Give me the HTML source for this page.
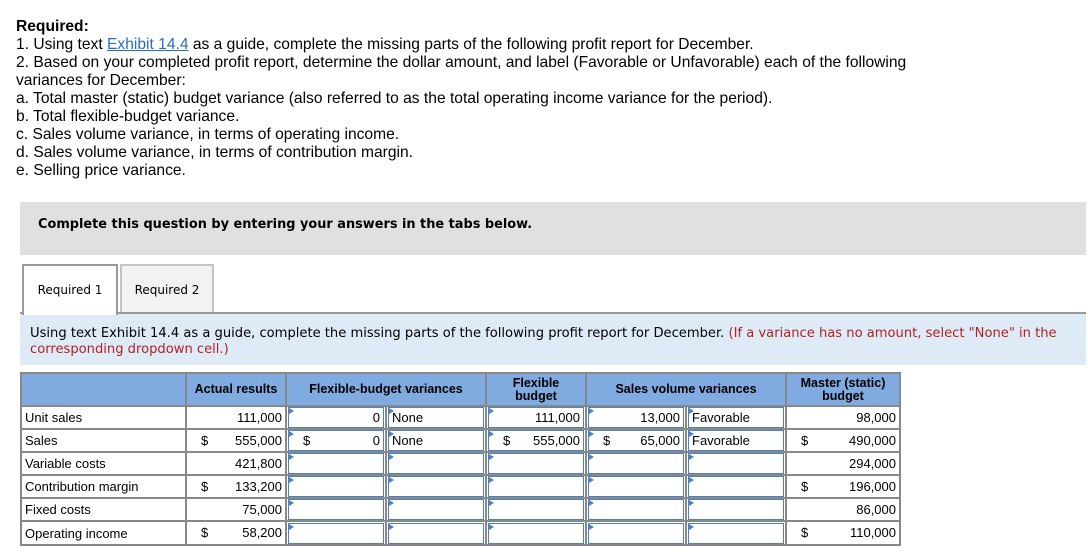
<!DOCTYPE html>
<html><head><style>
body{margin:0;width:1088px;height:552px;background:#fff;font-family:"Liberation Sans",Arial,sans-serif;color:#000;position:relative;overflow:hidden}
.q{position:absolute;left:16px;top:18px;font-size:15.6px;line-height:18px}
.q a{color:#2a6ebb;text-decoration:underline}
.gray{position:absolute;left:20px;top:202px;width:1066px;height:53px;background:#e0e0e0}
.gray span{position:absolute;left:18px;top:15px;font-family:"DejaVu Sans",sans-serif;font-weight:bold;font-size:12.9px}
.tab{position:absolute;top:264px;height:49px;font-family:"DejaVu Sans",sans-serif;font-size:12px;line-height:49px;text-align:center;box-sizing:border-box}
.t1{left:22px;width:96px;border:2px solid #999;border-bottom:none;background:#fff;height:51px;z-index:2}
.t2{left:120px;width:94px;border:2px solid #c4c4c4;border-bottom:none;background:#f2f2f2}
.line{position:absolute;left:20px;top:312px;width:1066px;height:2px;background:#999}
.blue{position:absolute;left:20px;top:314px;width:1066px;height:51px;background:#deebf7;font-family:"DejaVu Sans",sans-serif;font-size:13.1px;line-height:16px}
.blue div{position:absolute;left:10px;top:12px;white-space:nowrap}
.red{color:#b22222}
table{position:absolute;left:20px;top:372px;border-collapse:collapse;table-layout:fixed;font-size:13px}
td{border:2px solid #888;padding:0;height:20px;white-space:nowrap;overflow:hidden}
th{border:2px solid #888;background:#80abe0;font-size:12.5px;height:31px;line-height:13px;padding:0}
.l{padding-left:3px}
.in{position:relative;border:1px solid #4f81bd;height:19px;margin:0 1px;line-height:19px}
.in:before{content:"";position:absolute;left:0;top:0;border-left:5px solid #4f81bd;border-top:3px solid transparent;border-bottom:3px solid transparent}
.dl{position:absolute;left:14px}
.rv{position:absolute;right:3px}
.lv{position:absolute;left:3px}
.cell{position:relative;height:20px;line-height:20px}
</style></head><body>
<div class="q"><b>Required:</b><br>1. Using text <a>Exhibit 14.4</a> as a guide, complete the missing parts of the following profit report for December.<br>2. Based on your completed profit report, determine the dollar amount, and label (Favorable or Unfavorable) each of the following<br>variances for December:<br>a. Total master (static) budget variance (also referred to as the total operating income variance for the period).<br>b. Total flexible-budget variance.<br>c. Sales volume variance, in terms of operating income.<br>d. Sales volume variance, in terms of contribution margin.<br>e. Selling price variance.</div>
<div class="gray"><span>Complete this question by entering your answers in the tabs below.</span></div>
<div class="tab t1">Required 1</div><div class="tab t2">Required 2</div>
<div class="line"></div>
<div class="blue"><div>Using text Exhibit 14.4 as a guide, complete the missing parts of the following profit report for December. <span class="red">(If a variance has no amount, select "None" in the<br>corresponding dropdown cell.)</span></div></div>
<table>
<colgroup><col style="width:165px"><col style="width:100px"><col style="width:100px"><col style="width:100px"><col style="width:100px"><col style="width:100px"><col style="width:100px"><col style="width:114px"></colgroup>
<tr><th></th><th>Actual results</th><th colspan="2">Flexible-budget variances</th><th>Flexible<br>budget</th><th colspan="2">Sales volume variances</th><th>Master (static)<br>budget</th></tr>
<tr><td class="l">Unit sales</td><td><div class="cell"><span class="rv">111,000</span></div></td><td><div class="in"><span class="rv">0</span></div></td><td><div class="in"><span class="lv">None</span></div></td><td><div class="in"><span class="rv">111,000</span></div></td><td><div class="in"><span class="rv">13,000</span></div></td><td><div class="in"><span class="lv">Favorable</span></div></td><td><div class="cell"><span class="rv">98,000</span></div></td></tr>
<tr><td class="l">Sales</td><td><div class="cell"><span class="dl">$</span><span class="rv">555,000</span></div></td><td><div class="in"><span class="dl">$</span><span class="rv">0</span></div></td><td><div class="in"><span class="lv">None</span></div></td><td><div class="in"><span class="dl">$</span><span class="rv">555,000</span></div></td><td><div class="in"><span class="dl">$</span><span class="rv">65,000</span></div></td><td><div class="in"><span class="lv">Favorable</span></div></td><td><div class="cell"><span class="dl">$</span><span class="rv">490,000</span></div></td></tr>
<tr><td class="l" style="height:19px">Variable costs</td><td><div class="cell"><span class="rv">421,800</span></div></td><td><div class="in"></div></td><td><div class="in"></div></td><td><div class="in"></div></td><td><div class="in"></div></td><td><div class="in"></div></td><td><div class="cell"><span class="rv">294,000</span></div></td></tr>
<tr><td class="l">Contribution margin</td><td><div class="cell"><span class="dl">$</span><span class="rv">133,200</span></div></td><td><div class="in"></div></td><td><div class="in"></div></td><td><div class="in"></div></td><td><div class="in"></div></td><td><div class="in"></div></td><td><div class="cell"><span class="dl">$</span><span class="rv">196,000</span></div></td></tr>
<tr><td class="l" style="height:19px">Fixed costs</td><td><div class="cell"><span class="rv">75,000</span></div></td><td><div class="in"></div></td><td><div class="in"></div></td><td><div class="in"></div></td><td><div class="in"></div></td><td><div class="in"></div></td><td><div class="cell"><span class="rv">86,000</span></div></td></tr>
<tr><td class="l" style="height:22px">Operating income</td><td><div class="cell"><span class="dl">$</span><span class="rv">58,200</span></div></td><td><div class="in"></div></td><td><div class="in"></div></td><td><div class="in"></div></td><td><div class="in"></div></td><td><div class="in"></div></td><td><div class="cell"><span class="dl">$</span><span class="rv">110,000</span></div></td></tr>
</table>
</body></html>
